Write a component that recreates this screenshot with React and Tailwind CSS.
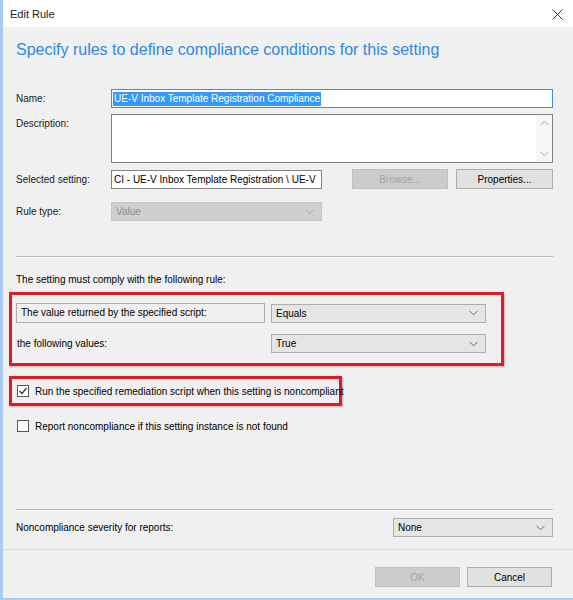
import React from "react";

const Chevron = ({ color = "#6d6d6d" }) => (
  <svg width="9" height="6" viewBox="0 0 9 6" className="shrink-0">
    <polyline points="0.5,0.8 4.5,4.8 8.5,0.8" fill="none" stroke={color} strokeWidth="1" />
  </svg>
);

const Select = ({ value, className = "", disabled = false }) => (
  <div
    className={`flex items-center justify-between h-[19px] pl-[4px] pr-[7px] border ${
      disabled
        ? "bg-[#cfcfcf] border-[#c6c6c6] text-[#8c8c8c]"
        : "bg-[#e5e5e5] border-[#adadad] text-black"
    } ${className}`}
  >
    <span className="leading-[17px]">{value}</span>
    <Chevron color={disabled ? "#a5a5a5" : "#6d6d6d"} />
  </div>
);

const Checkbox = ({ checked }) => (
  <div className="w-[12px] h-[12px] shrink-0 border border-[#555] bg-white flex items-center justify-center">
    {checked && (
      <svg width="10" height="10" viewBox="0 0 10 10">
        <polyline points="1.5,5 4,7.5 8.5,2" fill="none" stroke="#333" strokeWidth="1.2" />
      </svg>
    )}
  </div>
);

const Label = ({ children }) => (
  <div className="w-[95px] shrink-0 leading-[19px] text-[#1a1a1a]">{children}</div>
);

export default function App() {
  return (
    <div className="w-[573px] h-[600px] bg-white">
      <div
        className="w-[573px] h-[600px] flex flex-col bg-[#f0f0f0] border-l-[3px] border-b-2 border-[#a8ccf1] text-[10px] text-black overflow-hidden"
        style={{ fontFamily: '"Liberation Sans", Arial, sans-serif' }}
      >
        {/* title bar */}
        <div className="h-[27px] shrink-0 bg-white flex items-center justify-between pl-[7px] pr-[10px] pt-[1px]">
          <span className="text-[11px] text-[#222]">Edit Rule</span>
          <svg width="11" height="11" viewBox="0 0 11 11">
            <path d="M0.5 0.5 L10.5 10.5 M10.5 0.5 L0.5 10.5" stroke="#333" strokeWidth="1" />
          </svg>
        </div>

        {/* body */}
        <div className="h-[522px] shrink-0 pl-[13px] pr-[20px] flex flex-col">
          <div className="mt-[13px] h-[19px] leading-[19px] text-[16px] text-[#2f88e0]">
            Specify rules to define compliance conditions for this setting
          </div>

          <div className="mt-[30px] flex h-[19px]">
            <Label>Name:</Label>
            <div className="flex-1 border border-[#3d8ee4] bg-white flex items-center pl-[1px]">
              <span className="bg-[#3399ff] text-white leading-[14px] px-[1px]">
                UE-V Inbox Template Registration Compliance
              </span>
            </div>
          </div>

          <div className="mt-[6px] flex h-[49px]">
            <Label>Description:</Label>
            <div className="flex-1 border border-[#828282] bg-white flex justify-end">
              <div className="w-[16px] bg-[#f7f7f7] flex flex-col items-center justify-between py-[5px]">
                <svg width="9" height="6" viewBox="0 0 9 6">
                  <polyline points="0.5,5.2 4.5,1.2 8.5,5.2" fill="none" stroke="#a6a6a6" strokeWidth="1" />
                </svg>
                <Chevron color="#a6a6a6" />
              </div>
            </div>
          </div>

          <div className="mt-[6px] flex items-center h-[20px]">
            <Label>Selected setting:</Label>
            <div className="w-[211px] h-[19px] border border-[#828282] bg-white pl-[2px] leading-[17px] whitespace-nowrap overflow-hidden">
              CI - UE-V Inbox Template Registration \ UE-V
            </div>
            <div className="ml-[30px] w-[96px] h-[20px] bg-[#cccccc] border border-[#bfbfbf] text-[#a3a3a3] flex items-center justify-center">
              Browse...
            </div>
            <div className="ml-[8px] flex-1 h-[20px] bg-[#e1e1e1] border border-[#adadad] flex items-center justify-center">
              Properties...
            </div>
          </div>

          <div className="mt-[13px] flex h-[19px]">
            <Label>Rule type:</Label>
            <Select value="Value" className="w-[211px]" disabled />
          </div>

          <div className="mt-[35px] h-px bg-[#b4b4b4]" />
          <div className="h-px bg-white" />

          <div className="mt-[16px] h-[12px] leading-[12px]">
            The setting must comply with the following rule:
          </div>

          <div className="mt-[6px] -ml-[7px] w-[495px] h-[74px] border-[3px] border-[#e01b24] shadow-[1px_1px_2px_rgba(0,0,0,0.25)] pl-[4px] pt-[8px] flex flex-col">
            <div className="flex items-center h-[20px]">
              <div className="w-[249px] h-[20px] border border-[#adadad] pl-[4px] leading-[18px]">
                The value returned by the specified script:
              </div>
              <Select value="Equals" className="ml-[6px] w-[215px]" />
            </div>
            <div className="mt-[11px] flex items-center h-[19px]">
              <div className="w-[249px] pl-[1px]">the following values:</div>
              <Select value="True" className="ml-[6px] w-[215px]" />
            </div>
          </div>

          <div className="mt-[10px] -ml-[7px] w-[333px] h-[30px] border-[3px] border-[#e01b24] shadow-[1px_1px_2px_rgba(0,0,0,0.25)] pl-[5px] flex items-center">
            <Checkbox checked />
            <span className="ml-[6px] whitespace-nowrap">
              Run the specified remediation script when this setting is noncompliant
            </span>
          </div>

          <div className="mt-[14px] flex items-center h-[12px] pl-[1px]">
            <Checkbox />
            <span className="ml-[6px] whitespace-nowrap">
              Report noncompliance if this setting instance is not found
            </span>
          </div>

          <div className="mt-[77px] h-px bg-[#b4b4b4]" />
          <div className="h-px bg-white" />

          <div className="mt-[7px] flex items-center justify-between h-[19px]">
            <span>Noncompliance severity for reports:</span>
            <Select value="None" className="w-[160px]" />
          </div>
        </div>

        {/* footer */}
        <div className="flex-1 border-t border-[#dadada] flex justify-end items-start gap-[7px] pt-[17px] pr-[21px]">
          <div className="w-[85px] h-[20px] bg-[#cccccc] border border-[#bfbfbf] text-[#a3a3a3] flex items-center justify-center">
            OK
          </div>
          <div className="w-[85px] h-[20px] bg-[#e1e1e1] border border-[#adadad] flex items-center justify-center">
            Cancel
          </div>
        </div>
      </div>
    </div>
  );
}
